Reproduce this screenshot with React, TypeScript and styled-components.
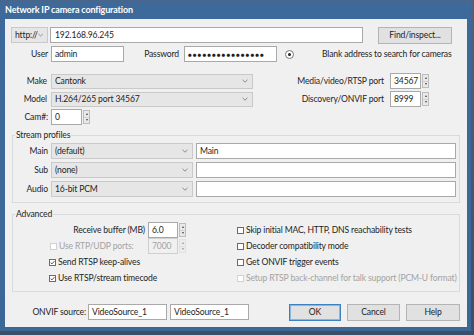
import styled, { createGlobalStyle } from "styled-components";

const GlobalStyle = createGlobalStyle`
  html, body {
    margin: 0;
    padding: 0;
  }
  body {
    background: #46566c;
    font-family: Lato, "Noto Sans", sans-serif;
    font-size: 8.6px;
    letter-spacing: -0.15px;
    color: #1e1e1e;
  }
`;

const Desktop = styled.div`
  width: 474px;
  height: 335px;
  overflow: hidden;
  background: linear-gradient(180deg, #52627a 0%, #3e4e64 100%);
`;

const Window = styled.div`
  width: 471px;
  height: 331px;
  box-sizing: border-box;
  padding: 0 4px 4px 5px;
  display: flex;
  flex-direction: column;
  background: linear-gradient(180deg, #4a6589 0px, #3d6a9b 4px, #3c6898 100%);
`;

const TitleBar = styled.div`
  height: 19px;
  display: flex;
  align-items: center;
  color: #fff;
  font-weight: 700;
  font-size: 9px;
`;

const Client = styled.div`
  flex: 1;
  background: #f0f0f0;
  padding: 8px 0 0 6px;
  display: flex;
  flex-direction: column;
`;

const Row = styled.div<{ $top?: number; $h?: number }>`
  display: flex;
  align-items: center;
  height: ${(p) => p.$h ?? 16}px;
  margin-top: ${(p) => p.$top ?? 0}px;
`;

const Label = styled.span<{ $w: number; $gap?: number; $disabled?: boolean }>`
  width: ${(p) => p.$w}px;
  flex: none;
  text-align: right;
  margin-right: ${(p) => p.$gap ?? 3}px;
  white-space: nowrap;
  color: ${(p) => (p.$disabled ? "#a3a3a3" : "#1e1e1e")};
`;

const TextBox = styled.div<{ $w: number; $disabled?: boolean }>`
  width: ${(p) => p.$w}px;
  height: 16px;
  box-sizing: border-box;
  flex: none;
  border: 1px solid ${(p) => (p.$disabled ? "#cfcfcf" : "#a9a9a9")};
  background: ${(p) => (p.$disabled ? "#f0f0f0" : "#fff")};
  color: ${(p) => (p.$disabled ? "#a3a3a3" : "#1e1e1e")};
  display: flex;
  align-items: center;
  padding-left: 3px;
  white-space: nowrap;
  overflow: hidden;
`;

const Dots = styled.span`
  font-size: 6.5px;
  letter-spacing: 0.9px;
`;

const Combo = styled.div<{ $w: number; $h?: number }>`
  width: ${(p) => p.$w}px;
  height: ${(p) => p.$h ?? 16}px;
  box-sizing: border-box;
  flex: none;
  border: 1px solid #c9c9c9;
  background: #e6e6e6;
  display: flex;
  align-items: center;
  padding: 0 4px 0 3px;
  white-space: nowrap;
`;

const ComboText = styled.span`
  flex: 1;
`;

const Chevron = () => (
  <svg width="6" height="4" viewBox="0 0 6 4">
    <polyline points="0.5,0.8 3,3.2 5.5,0.8" fill="none" stroke="#808080" strokeWidth="0.9" />
  </svg>
);

const SpinBox = styled.div<{ $disabled?: boolean; $gap?: number }>`
  width: 7px;
  height: 14px;
  flex: none;
  margin-left: ${(p) => p.$gap ?? 1}px;
  display: flex;
  flex-direction: column;
  border: 1px solid ${(p) => (p.$disabled ? "#d8d8d8" : "#bdbdbd")};
  box-sizing: border-box;
  background: #e9e9e9;
  opacity: ${(p) => (p.$disabled ? 0.5 : 1)};
`;

const SpinHalf = styled.div<{ $down?: boolean }>`
  flex: 1;
  display: flex;
  align-items: center;
  justify-content: center;
  border-top: ${(p) => (p.$down ? "1px solid #cfcfcf" : "none")};
  &::after {
    content: "";
    border-left: 1.5px solid transparent;
    border-right: 1.5px solid transparent;
    ${(p) =>
      p.$down ? "border-top: 2px solid #444;" : "border-bottom: 2px solid #444;"}
  }
`;

const Spinner = ({ disabled, gap }: { disabled?: boolean; gap?: number }) => (
  <SpinBox $disabled={disabled} $gap={gap}>
    <SpinHalf />
    <SpinHalf $down />
  </SpinBox>
);

const Button = styled.div<{ $w: number; $gap?: number; $default?: boolean }>`
  width: ${(p) => p.$w}px;
  height: 17px;
  box-sizing: border-box;
  flex: none;
  margin-left: ${(p) => p.$gap ?? 0}px;
  background: #e1e1e1;
  border: 1px solid ${(p) => (p.$default ? "#3c82c0" : "#b4b4b4")};
  box-shadow: ${(p) => (p.$default ? "inset 0 0 0 1px #8fb6d8" : "none")};
  display: flex;
  align-items: center;
  justify-content: center;
`;

const Radio = styled.div`
  width: 9px;
  height: 9px;
  box-sizing: border-box;
  margin-left: 8px;
  border-radius: 50%;
  border: 1px solid #777;
  background: #fff;
  display: flex;
  align-items: center;
  justify-content: center;
  &::after {
    content: "";
    width: 3px;
    height: 3px;
    border-radius: 50%;
    background: #222;
  }
`;

const Hint = styled.span`
  margin-left: 28px;
  white-space: nowrap;
`;

const Group = styled.fieldset<{ $top: number }>`
  margin: ${(p) => p.$top}px 0 0 1px;
  width: 448px;
  box-sizing: border-box;
  min-width: 0;
  border: 1px solid #dadada;
  padding: 2px 0 5px 0;
`;

const Legend = styled.legend`
  margin-left: 2px;
  padding: 0 1px;
  line-height: 12px;
  font-size: 8.6px;
`;

const ProfileRows = styled.div`
  display: flex;
  flex-direction: column;
  gap: 3px;
`;

const AdvancedGrid = styled.div`
  display: grid;
  grid-template-columns: 224px 1fr;
  grid-auto-rows: 16px;
`;

const Cell = styled.div<{ $pad?: number }>`
  display: flex;
  align-items: center;
  padding-left: ${(p) => p.$pad ?? 0}px;
  white-space: nowrap;
`;

const CheckText = styled.span<{ $w?: number; $disabled?: boolean }>`
  display: flex;
  align-items: center;
  gap: 2px;
  width: ${(p) => (p.$w ? `${p.$w}px` : "auto")};
  flex: none;
  color: ${(p) => (p.$disabled ? "#a3a3a3" : "#1e1e1e")};
`;

const Box = styled.span<{ $disabled?: boolean }>`
  width: 7px;
  height: 7px;
  box-sizing: border-box;
  border: 1px solid ${(p) => (p.$disabled ? "#d2d2d2" : "#6a6a6a")};
  background: #fff;
  display: inline-flex;
  align-items: center;
  justify-content: center;
`;

const Check = ({
  checked,
  disabled,
  w,
  children,
}: {
  checked?: boolean;
  disabled?: boolean;
  w?: number;
  children: React.ReactNode;
}) => (
  <CheckText $w={w} $disabled={disabled}>
    <Box $disabled={disabled}>
      {checked && (
        <svg width="5" height="5" viewBox="0 0 5 5">
          <polyline points="0.6,2.6 2,3.9 4.5,1" fill="none" stroke="#333" strokeWidth="0.8" />
        </svg>
      )}
    </Box>
    {children}
  </CheckText>
);

const Footer = styled(Row)`
  margin-top: 12px;
`;

export default function App() {
  return (
    <Desktop>
      <GlobalStyle />
      <Window>
        <TitleBar>Network IP camera configuration</TitleBar>
        <Client>
          <Row>
            <Combo $w={37}>
              <ComboText>http://</ComboText>
              <Chevron />
            </Combo>
            <TextBox $w={313} style={{ marginLeft: 2, paddingLeft: 4 }}>
              192.168.96.245
            </TextBox>
            <Button $w={74} $gap={15}>
              Find/inspect...
            </Button>
          </Row>
          <Row $top={3}>
            <Label $w={37}>User</Label>
            <TextBox $w={73}>admin</TextBox>
            <Label $w={55} $gap={5}>
              Password
            </Label>
            <TextBox $w={93}>
              <Dots>●●●●●●●●●●●●●●●●</Dots>
            </TextBox>
            <Radio />
            <Hint>Blank address to search for cameras</Hint>
          </Row>

          <Row $top={11}>
            <Label $w={36} $gap={4}>
              Make
            </Label>
            <Combo $w={202} $h={15}>
              <ComboText>Cantonk</ComboText>
              <Chevron />
            </Combo>
            <Label $w={131} $gap={6}>
              Media/video/RTSP port
            </Label>
            <TextBox $w={31}>34567</TextBox>
            <Spinner />
          </Row>
          <Row $top={2}>
            <Label $w={36} $gap={4}>
              Model
            </Label>
            <Combo $w={202} $h={15}>
              <ComboText>H.264/265 port 34567</ComboText>
              <Chevron />
            </Combo>
            <Label $w={131} $gap={6}>
              Discovery/ONVIF port
            </Label>
            <TextBox $w={31}>8999</TextBox>
            <Spinner />
          </Row>
          <Row $top={2}>
            <Label $w={37} $gap={3}>
              Cam#:
            </Label>
            <TextBox $w={31}>0</TextBox>
            <Spinner />
          </Row>

          <Group $top={4}>
            <Legend>Stream profiles</Legend>
            <ProfileRows>
              {[
                ["Main", "(default)", "Main"],
                ["Sub", "(none)", ""],
                ["Audio", "16-bit PCM", ""],
              ].map(([label, value, name]) => (
                <Row key={label}>
                  <Label $w={35}>{label}</Label>
                  <Combo $w={142}>
                    <ComboText>{value}</ComboText>
                    <Chevron />
                  </Combo>
                  <TextBox $w={260} style={{ marginLeft: 3 }}>
                    {name}
                  </TextBox>
                </Row>
              ))}
            </ProfileRows>
          </Group>

          <Group $top={5}>
            <Legend>Advanced</Legend>
            <AdvancedGrid>
              <Cell>
                <Label $w={132}>Receive buffer (MB)</Label>
                <TextBox $w={30}>6.0</TextBox>
                <Spinner gap={1} />
              </Cell>
              <Cell>
                <Check>Skip initial MAC, HTTP, DNS reachability tests</Check>
              </Cell>
              <Cell $pad={37}>
                <Check disabled w={98}>
                  Use RTP/UDP ports:
                </Check>
                <TextBox $w={30} $disabled>
                  7000
                </TextBox>
                <Spinner disabled gap={1} />
              </Cell>
              <Cell>
                <Check>Decoder compatibility mode</Check>
              </Cell>
              <Cell $pad={36}>
                <Check checked>Send RTSP keep-alives</Check>
              </Cell>
              <Cell>
                <Check>Get ONVIF trigger events</Check>
              </Cell>
              <Cell $pad={36}>
                <Check checked>Use RTSP/stream timecode</Check>
              </Cell>
              <Cell>
                <Check disabled>Setup RTSP back-channel for talk support (PCM-U format)</Check>
              </Cell>
            </AdvancedGrid>
          </Group>

          <Footer>
            <Label $w={75} $gap={2}>
              ONVIF source:
            </Label>
            <TextBox $w={79}>VideoSource_1</TextBox>
            <TextBox $w={79} style={{ marginLeft: 3 }}>
              VideoSource_1
            </TextBox>
            <Button $w={52} $gap={40} $default>
              OK
            </Button>
            <Button $w={53} $gap={6}>
              Cancel
            </Button>
            <Button $w={54} $gap={6}>
              Help
            </Button>
          </Footer>
        </Client>
      </Window>
    </Desktop>
  );
}
